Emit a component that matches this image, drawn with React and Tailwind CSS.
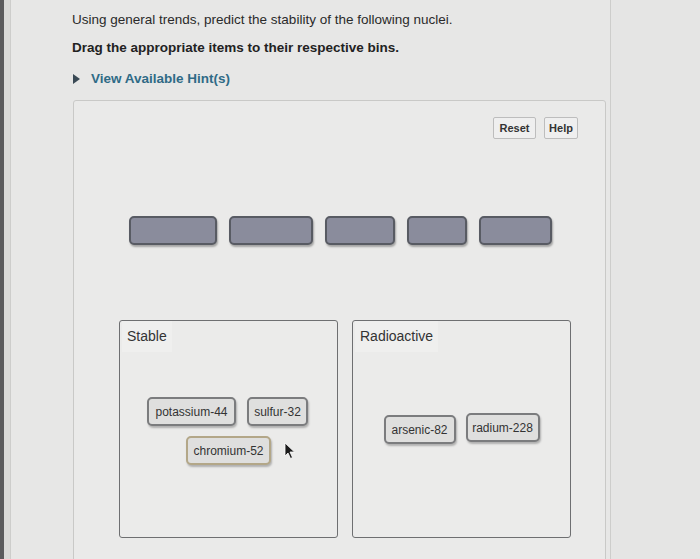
import React from 'react';

const bars = [88, 84, 70, 60, 73];

const Token = ({ label, width, highlight }) => (
  <div
    className={`h-[29px] flex items-center justify-center rounded-[5px] border-2 bg-[#dfdfde] text-[12px] text-[#333] shadow-[1px_2px_2px_rgba(0,0,0,0.25)] ${
      highlight ? 'border-[#b3a788]' : 'border-[#7b7c7e]'
    }`}
    style={{ width }}
  >
    {label}
  </div>
);

const Bin = ({ title, top, children }) => (
  <div className="relative w-[219px] h-[218px] border-[1.5px] border-[#6e6f71] rounded-[3px] bg-[#ebebea]">
    <div className="absolute left-[2px] top-0 px-[5px] py-[5px] bg-[#efefee] text-[14px] text-[#333]">
      {title}
    </div>
    <div className="flex flex-col items-center gap-[10px]" style={{ paddingTop: top }}>
      {children}
    </div>
  </div>
);

const App = () => {
  return (
    <div className="w-[700px] h-[559px] overflow-hidden bg-[#e4e4e2] flex font-['Liberation_Sans',Arial,sans-serif]">
      <div className="w-[4px] bg-[#5b5b5d]" />
      <div className="w-[6px] bg-[#dadad8]" />
      <div className="w-[601px] border-l border-r border-[#cdcdcb] bg-[#e7e7e6] pl-[61px] pt-[11px]">
        <p className="text-[13.5px] leading-[17px] text-[#2a2a2a]">
          Using general trends, predict the stability of the following nuclei.
        </p>
        <p className="mt-[11px] text-[13.5px] leading-[17px] font-bold text-[#222]">
          Drag the appropriate items to their respective bins.
        </p>
        <div className="mt-[14px] flex items-center text-[13.5px] leading-[17px] font-bold text-[#2f6b86]">
          <svg width="8" height="10" viewBox="0 0 8 10" className="ml-[1px] mr-[10px]">
            <path d="M0 0 L7 5 L0 10 Z" fill="#3a4a55" />
          </svg>
          View Available Hint(s)
        </div>

        <div className="mt-[13px] ml-[1px] w-[533px] h-[500px] border border-[#c9c9c7] rounded-[3px] bg-[#eaeae9]">
          <div className="flex justify-end gap-[8px] pt-[16px] pr-[27px]">
            <button className="w-[43px] h-[22px] border border-[#bdbdbd] rounded-[2px] bg-[#efefef] text-[11px] font-bold text-[#333]">
              Reset
            </button>
            <button className="w-[34px] h-[22px] border border-[#bdbdbd] rounded-[2px] bg-[#efefef] text-[11px] font-bold text-[#333]">
              Help
            </button>
          </div>

          <div className="flex gap-[12px] pl-[55px] mt-[77px]">
            {bars.map((w, i) => (
              <div
                key={i}
                className="h-[29px] rounded-[5px] border-2 border-[#585b63] bg-[#8a8c9c] shadow-[1px_2px_2px_rgba(0,0,0,0.3)]"
                style={{ width: w }}
              />
            ))}
          </div>

          <div className="flex gap-[14px] pl-[45px] mt-[75px]">
            <Bin title="Stable" top={76}>
              <div className="flex gap-[11px] ml-[-2px]">
                <Token label="potassium-44" width={89} />
                <Token label="sulfur-32" width={61} />
              </div>
              <div className="relative">
                <Token label="chromium-52" width={85} highlight />
                <svg width="12" height="18" viewBox="0 0 12 18" className="absolute left-[98px] top-[6px]">
                  <path d="M1 1 L1 14 L4 11 L6.5 16.5 L8.5 15.5 L6 10 L10.5 10 Z" fill="#1c1c1c" stroke="#fff" strokeWidth="0.8" />
                </svg>
              </div>
            </Bin>
            <Bin title="Radioactive" top={94}>
              <div className="flex gap-[10px] items-start">
                <Token label="arsenic-82" width={72} />
                <div className="mt-[-2px]">
                  <Token label="radium-228" width={74} />
                </div>
              </div>
            </Bin>
          </div>
        </div>
      </div>
      <div className="flex-1 bg-[#e5e5e4]" />
    </div>
  );
};

export default App;
